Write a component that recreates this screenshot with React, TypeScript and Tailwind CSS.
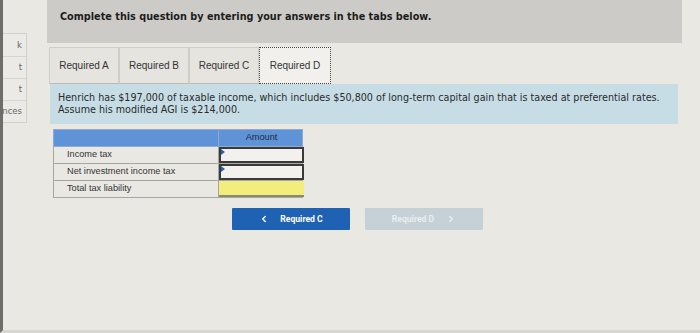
import React from 'react';
import { ChevronLeft, ChevronRight } from 'lucide-react';

const tabs = ['Required A', 'Required B', 'Required C', 'Required D'];

function Sidebar() {
  const items = ['k', 't', 't', 'nces'];
  return (
    <div className="w-[24px] shrink-0 pt-[33px]">
      <div className="border-y border-r border-[#d2d0cb] bg-[#eceae6]">
        {items.map((t, i) => (
          <div
            key={i}
            className={`flex h-[22px] items-center justify-end pr-[4px] text-[8.5px] text-[#666] ${i > 0 ? 'border-t border-[#d6d4cf]' : ''}`}
          >
            {t}
          </div>
        ))}
      </div>
    </div>
  );
}

function InputCell() {
  return (
    <div className="relative h-full border-2 border-[#3a3a3a] bg-[#f2f1ee]">
      <span className="absolute left-0 top-0 h-0 w-0 border-y-[3px] border-l-[4px] border-y-transparent border-l-[#2b5fa8]" />
    </div>
  );
}

export default function App() {
  return (
    <div className="flex h-[333px] w-[700px] overflow-hidden border-l-[3px] border-b-[3px] border-l-[#6f6d69] border-b-[#d9d7d2] bg-[#eae8e3] font-['DejaVu_Sans',sans-serif]">
      <Sidebar />
      <div className="ml-[20px] flex w-[635px] flex-col">
        <div className="flex h-[43px] items-center bg-[#cdcbc7] pl-[13px] pb-[9px] text-[9.7px] font-bold text-[#1c1c1c]">
          Complete this question by entering your answers in the tabs below.
        </div>

        <div className="mt-[4px] ml-[2px] flex h-[37px] font-['Liberation_Sans',sans-serif] text-[10px] text-[#333]">
          {tabs.map((t, i) => (
            <div
              key={t}
              className={
                i === 3
                  ? 'flex w-[72px] items-center justify-center border-[1.5px] border-dotted border-[#444] bg-[#f1f0ec]'
                  : 'flex w-[70px] items-center justify-center border border-[#cfcdc8] border-b-[#bdbab5] bg-[#e6e4df]'
              }
            >
              {t}
            </div>
          ))}
        </div>

        <div className="ml-[3px] mr-[4px] flex h-[40px] flex-col justify-center bg-[#c7dde6] pl-[8px] text-[9.6px] leading-[12px] text-[#2a2a2a]">
          <p>Henrich has $197,000 of taxable income, which includes $50,800 of long-term capital gain that is taxed at preferential rates.</p>
          <p>Assume his modified AGI is $214,000.</p>
        </div>

        <div className="ml-[6px] mt-[5px] w-[250px] font-['Liberation_Sans',sans-serif] text-[9.2px] text-[#333]">
          <div className="grid h-[18px] grid-cols-[165px_85px] border border-[#8fa9cf] bg-[#5f93d8]">
            <div className="border-r border-[#8aa9d6]" />
            <div className="flex items-center justify-center text-[#1a2a40]">Amount</div>
          </div>
          {['Income tax', 'Net investment income tax', 'Total tax liability'].map((label, i) => (
            <div key={label} className="grid h-[17px] grid-cols-[165px_85px] border-x border-b border-[#a8a6a2]">
              <div className="flex items-center border-r border-[#a8a6a2] pl-[13px]">{label}</div>
              {i < 2 ? (
                <InputCell />
              ) : (
                <div className="border-b-2 border-[#8a8a70] bg-[#f3ee7c]" />
              )}
            </div>
          ))}
        </div>

        <div className="ml-[185px] mt-[10px] flex gap-[15px] font-['Roboto',sans-serif] text-[8.6px] font-bold">
          <div className="flex h-[22px] w-[118px] items-center justify-center gap-[11px] rounded-[1px] bg-[#1f62b3] text-white">
            <ChevronLeft className="h-[10px] w-[10px]" strokeWidth={3.5} />
            <span>Required C</span>
          </div>
          <div className="flex h-[22px] w-[118px] items-center justify-center gap-[12px] rounded-[1px] bg-[#c5d0d7] text-[#e9eef1]">
            <span>Required D</span>
            <ChevronRight className="h-[10px] w-[10px]" strokeWidth={3.5} />
          </div>
        </div>
      </div>
    </div>
  );
}
